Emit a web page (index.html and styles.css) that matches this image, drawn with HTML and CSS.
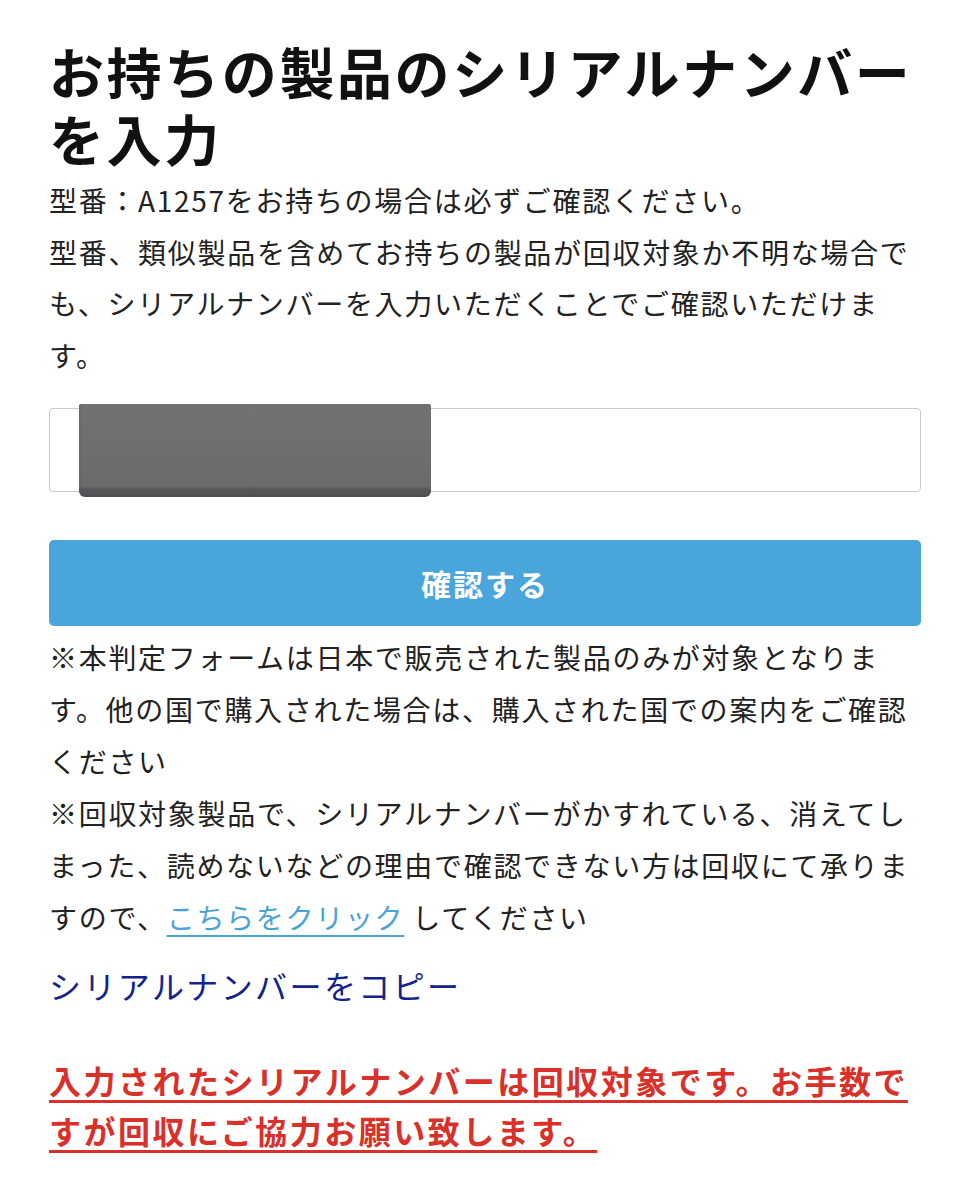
FILE: index.html
```html
<!DOCTYPE html>
<html lang="ja">
<head>
<meta charset="utf-8">
<title>シリアルナンバー入力</title>
<link rel="stylesheet" href="styles.css">
</head>
<body>
<main class="page">
  <h1 class="title">お持ちの製品のシリアルナンバーを入力</h1>
  <p class="lead">型番：A1257をお持ちの場合は必ずご確認ください。</p>
  <p class="lead">型番、類似製品を含めてお持ちの製品が回収対象か不明な場合でも、シリアルナンバーを入力いただくことでご確認いただけます。</p>
  <div class="field">
    <input class="serial-input" type="text" aria-label="シリアルナンバー">
    <div class="redact"></div>
  </div>
  <button class="confirm-btn" type="button">確認する</button>
  <div class="notes">
    <p>※本判定フォームは日本で販売された製品のみが対象となります。他の国で購入された場合は、購入された国での案内をご確認ください</p>
    <p>※回収対象製品で、シリアルナンバーがかすれている、消えてしまった、読めないなどの理由で確認できない方は回収にて承りますので、<a class="link" href="#">こちらをクリック</a> してください</p>
  </div>
  <p class="copy">シリアルナンバーをコピー</p>
  <p class="result">入力されたシリアルナンバーは回収対象です。お手数ですが回収にご協力お願い致します。</p>
</main>
</body>
</html>
```

FILE: styles.css
```css
html, body {
  margin: 0;
  padding: 0;
  background: #ffffff;
}

body {
  font-family: "Noto Sans CJK JP", "Noto Sans", sans-serif;
  color: #222222;
}

.page {
  padding: 0 50px 40px 49px;
}

.title {
  margin: 37px 0 0;
  font-size: 55px;
  letter-spacing: 2.6px;
  line-height: 67px;
  font-weight: 700;
  color: #111111;
}

.lead {
  margin: 0;
  font-size: 28px;
  letter-spacing: 1.7px;
  line-height: 51.5px;
}

.title + .lead {
  margin-top: 4px;
}

.field {
  position: relative;
  margin-top: 27px;
}

.serial-input {
  display: block;
  box-sizing: border-box;
  width: 100%;
  height: 84px;
  margin: 0;
  border: 1px solid #c9c9c9;
  border-radius: 4px;
  background: #ffffff;
  font: inherit;
}

.redact {
  position: absolute;
  left: 30px;
  top: -4px;
  width: 352px;
  height: 93px;
  border-radius: 2px 2px 6px 6px;
  background: linear-gradient(to bottom, #727272 0%, #6b6b6b 88%, #575757 92%, #4f4f55 100%);
  box-shadow: inset 2px 0 2px rgba(80, 90, 130, 0.35);
}

.confirm-btn {
  display: block;
  width: 100%;
  height: 86px;
  margin: 48px 0 0;
  border: none;
  border-radius: 5px;
  background: #4aa5db;
  color: #ffffff;
  font-family: inherit;
  font-size: 30px;
  font-weight: 700;
  letter-spacing: 2px;
}

.notes {
  margin-top: 5px;
}

.notes p {
  margin: 0;
  font-size: 28px;
  letter-spacing: 1.7px;
  line-height: 52px;
}

.link {
  color: #4aa3d8;
  text-decoration: underline;
  text-underline-offset: 6px;
  text-decoration-thickness: 2px;
}

.copy {
  margin: 17px 0 0;
  font-size: 32px;
  letter-spacing: 2.4px;
  line-height: 50px;
  color: #14238c;
}

.result {
  margin: 45px 0 0;
  font-size: 32px;
  letter-spacing: 2.5px;
  line-height: 50px;
  font-weight: 700;
  color: #d9302a;
  text-decoration: underline;
  text-underline-offset: 6px;
  text-decoration-thickness: 3px;
}
```
